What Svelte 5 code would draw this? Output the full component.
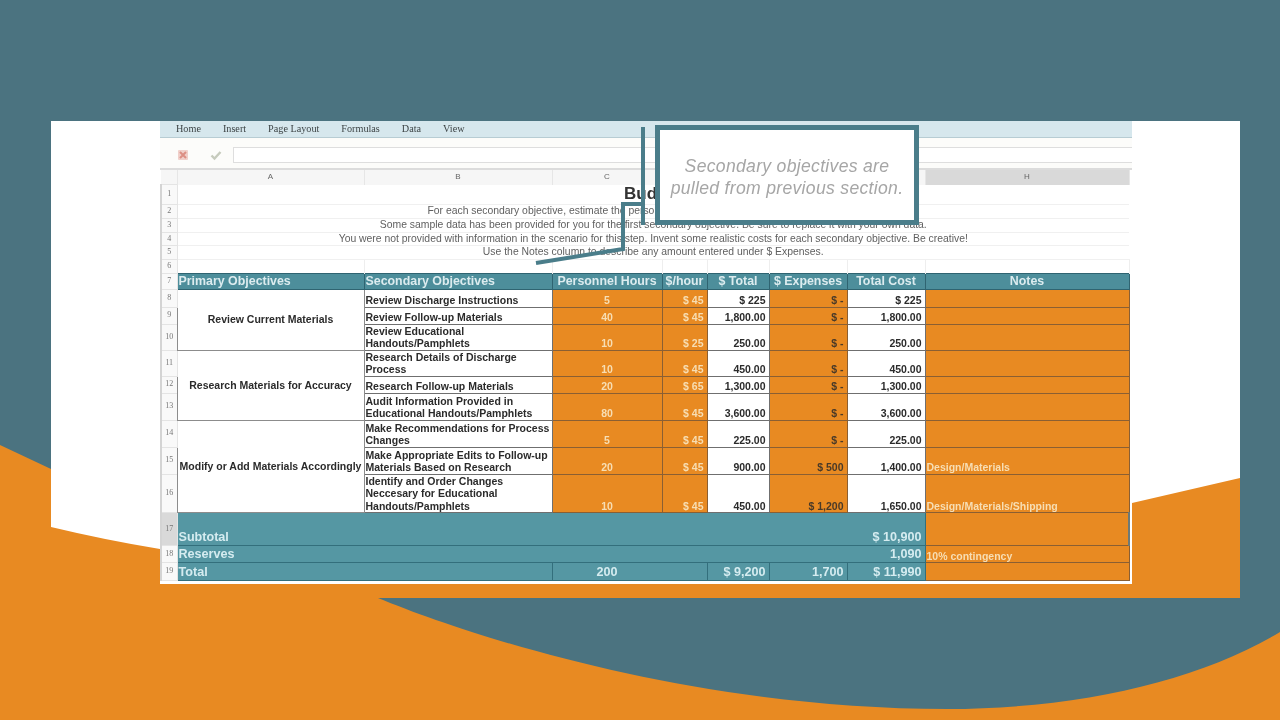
<script>
	const menu = ['Home', 'Insert', 'Page Layout', 'Formulas', 'Data', 'View'];
	const letters = ['A', 'B', 'C', '', '', '', '', 'H'];
	const intro = [
		{ n: 2, h: 14, text: 'For each secondary objective, estimate the personnel cost and any other expenses for the project.' },
		{ n: 3, h: 13, text: 'Some sample data has been provided for you for the first secondary objective. Be sure to replace it with your own data.' },
		{ n: 4, h: 13, text: 'You were not provided with information in the scenario for this step. Invent some realistic costs for each secondary objective. Be creative!' },
		{ n: 5, h: 14, text: 'Use the Notes column to describe any amount entered under $ Expenses.' }
	];
	const heads = ['Primary Objectives', 'Secondary Objectives', 'Personnel Hours', '$/hour', '$ Total', '$ Expenses', 'Total Cost', 'Notes'];
	const rows = [
		{ n: 8, h: 18, primary: 'Review Current Materials', span: 3, name: 'Review Discharge Instructions', hours: 5, rate: '$ 45', total: '$ 225', exp: '$ -', cost: '$ 225' },
		{ n: 9, h: 17, name: 'Review Follow-up Materials', hours: 40, rate: '$ 45', total: '1,800.00', exp: '$ -', cost: '1,800.00' },
		{ n: 10, h: 26, name: 'Review Educational Handouts/Pamphlets', hours: 10, rate: '$ 25', total: '250.00', exp: '$ -', cost: '250.00' },
		{ n: 11, h: 25, primary: 'Research Materials for Accuracy', span: 3, name: 'Research Details of Discharge Process', hours: 10, rate: '$ 45', total: '450.00', exp: '$ -', cost: '450.00' },
		{ n: 12, h: 17, name: 'Research Follow-up Materials', hours: 20, rate: '$ 65', total: '1,300.00', exp: '$ -', cost: '1,300.00' },
		{ n: 13, h: 27, name: 'Audit Information Provided in Educational Handouts/Pamphlets', hours: 80, rate: '$ 45', total: '3,600.00', exp: '$ -', cost: '3,600.00' },
		{ n: 14, h: 27, primary: 'Modify or Add Materials Accordingly', span: 3, name: 'Make Recommendations for Process Changes', hours: 5, rate: '$ 45', total: '225.00', exp: '$ -', cost: '225.00' },
		{ n: 15, h: 27, name: 'Make Appropriate Edits to Follow-up Materials Based on Research', hours: 20, rate: '$ 45', total: '900.00', exp: '$ 500', cost: '1,400.00', note: 'Design/Materials' },
		{ n: 16, h: 38, name: 'Identify and Order Changes Neccesary for Educational Handouts/Pamphlets', hours: 10, rate: '$ 45', total: '450.00', exp: '$ 1,200', cost: '1,650.00', note: 'Design/Materials/Shipping' }
	];
</script>

<div class="slide">
	<svg class="backdrop" viewBox="0 0 1280 720" aria-hidden="true">
		<rect width="1280" height="720" fill="#4b7380" />
		<path d="M0 445 L51 469 L51 598 L378 598 C480 640 700 709 947 709 C1080 709 1200 680 1280 632 L1280 720 L0 720 Z" fill="#e88a22" />
		<rect x="51" y="121" width="1189" height="477" fill="#fff" />
		<path d="M51 527 Q105 540 160 549 L1132 503 L1240 478 L1240 598 L51 598 Z" fill="#e88a22" />
	</svg>

	<div class="sheet">
		<nav class="menu">
			{#each menu as item}
				<span>{item}</span>
			{/each}
		</nav>
		<div class="formula">
			<svg class="tool cancel" viewBox="0 0 12 12" aria-hidden="true">
				<rect x="1" y="1" width="10" height="10" rx="1" fill="#f0d0ca" />
				<path d="M3 3 L9 9 M9 3 L3 9" stroke="#dc8f84" stroke-width="2" />
			</svg>
			<svg class="tool" viewBox="0 0 12 12" aria-hidden="true">
				<path d="M1.5 6.5 L4.5 9.5 L10.5 3" fill="none" stroke="#c6cbbd" stroke-width="2.4" />
			</svg>
			<div class="input"></div>
		</div>

		<table>
			<colgroup>
				<col class="c-num" /><col class="c-a" /><col class="c-b" /><col class="c-c" /><col class="c-d" /><col class="c-e" /><col class="c-f" /><col class="c-g" /><col class="c-h" />
			</colgroup>
			<thead>
				<tr class="letters">
					<th></th>
					{#each letters as l}
						<th class:picked={l === 'H'}>{l}</th>
					{/each}
				</tr>
			</thead>
			<tbody>
				<tr style:height="20px">
					<td class="num">1</td>
					<td colspan="8" class="title">Budget</td>
				</tr>
				{#each intro as line}
					<tr style:height="{line.h}px">
						<td class="num">{line.n}</td>
						<td colspan="8" class="intro">{line.text}</td>
					</tr>
				{/each}
				<tr class="spacer" style:height="13px">
					<td class="num">6</td>
					{#each letters as l}
						<td></td>
					{/each}
				</tr>
				<tr class="heads" style:height="16px">
					<td class="num">7</td>
					{#each heads as head, i}
						<th class:left={i < 2}>{head}</th>
					{/each}
				</tr>
				{#each rows as row}
					<tr style:height="{row.h}px">
						<td class="num">{row.n}</td>
						{#if row.primary}
							<td rowspan={row.span} class="primary">{row.primary}</td>
						{/if}
						<td class="name">{row.name}</td>
						<td class="fill pale mid">{row.hours}</td>
						<td class="fill pale right">{row.rate}</td>
						<td class="plain right">{row.total}</td>
						<td class="fill dark right">{row.exp}</td>
						<td class="plain right">{row.cost}</td>
						<td class="fill pale note">{row.note ?? ''}</td>
					</tr>
				{/each}
				<tr class="sum" style:height="33px">
					<td class="num grey">17</td>
					<td colspan="7" class="band"><div class="split"><span>Subtotal</span><span>$ 10,900</span></div></td>
					<td class="fill inset"></td>
				</tr>
				<tr class="sum" style:height="17px">
					<td class="num">18</td>
					<td colspan="7" class="band"><div class="split"><span>Reserves</span><span>1,090</span></div></td>
					<td class="fill pale note">10% contingency</td>
				</tr>
				<tr class="sum" style:height="18px">
					<td class="num">19</td>
					<td colspan="2" class="band">Total</td>
					<td colspan="2" class="band hours">200</td>
					<td class="band right">$ 9,200</td>
					<td class="band right">1,700</td>
					<td class="band right">$ 11,990</td>
					<td class="fill"></td>
				</tr>
			</tbody>
		</table>
	</div>

	<svg class="leader" viewBox="0 0 1280 720" aria-hidden="true">
		<polyline points="536,263 623,249 623,204 641,204" />
		<line x1="643" y1="127" x2="643" y2="225" />
	</svg>
	<div class="callout">Secondary objectives are<br />pulled from previous section.</div>
</div>

<style>
	:global(body) {
		margin: 0;
	}
	.slide {
		position: relative;
		width: 1280px;
		height: 720px;
		overflow: hidden;
		box-sizing: border-box;
		padding: 121px 0 0 160px;
		font-family: 'Liberation Sans', Arial, sans-serif;
	}
	.backdrop,
	.leader {
		position: absolute;
		left: 0;
		top: 0;
		width: 1280px;
		height: 720px;
	}
	.leader polyline,
	.leader line {
		fill: none;
		stroke: #4a7d8a;
		stroke-width: 4;
	}
	.sheet {
		position: relative;
		width: 972px;
		height: 463px;
		background: #fff;
		filter: blur(0.6px);
	}
	.menu {
		display: flex;
		gap: 22px;
		box-sizing: border-box;
		height: 17px;
		padding: 1px 0 0 16px;
		background: #d6e7ed;
		border-bottom: 1px solid #b7ccd3;
		font-family: 'Liberation Serif', serif;
		font-size: 10.2px;
		line-height: 14px;
		color: #3d4446;
	}
	.formula {
		display: flex;
		align-items: center;
		gap: 11px;
		box-sizing: border-box;
		height: 32px;
		padding: 3px 0 0 17px;
		background: #fcfcfa;
		border-bottom: 2px solid #dcdcdc;
	}
	.tool {
		width: 12px;
		height: 12px;
		flex: none;
	}
	.cancel {
		margin-right: 10px;
	}
	.input {
		flex: 1;
		height: 14px;
		background: #fff;
		border: 1px solid #dedede;
		border-right: 0;
	}
	table {
		table-layout: fixed;
		width: 968px;
		border-collapse: collapse;
		font-size: 10.5px;
		line-height: 12.5px;
		color: #2b2b2b;
	}
	.c-num { width: 16px; }
	.c-a { width: 187px; }
	.c-b { width: 188px; }
	.c-c { width: 110px; }
	.c-d { width: 45px; }
	.c-e { width: 62px; }
	.c-f { width: 78px; }
	.c-g { width: 78px; }
	.c-h { width: 204px; }
	td,
	th {
		padding: 0 1px;
		overflow: hidden;
	}
	.letters th {
		height: 14px;
		background: #f6f6f6;
		border-right: 1px solid #e6e6e6;
		font-size: 8px;
		font-weight: normal;
		color: #666;
	}
	.letters th.picked {
		background: #d9d9d9;
	}
	.num {
		padding: 0;
		background: #f9f9f9;
		border: 1px solid #e4e4e4;
		border-left: 2px solid #d4d4d4;
		font-family: 'Liberation Serif', serif;
		font-size: 8px;
		text-align: center;
		color: #777;
	}
	.num.grey {
		background: #d9d9d9;
	}
	.title {
		font-size: 17px;
		font-weight: bold;
		text-align: center;
		color: #333;
	}
	.intro {
		border-top: 1px solid #f0f0f0;
		border-bottom: 1px solid #f0f0f0;
		font-size: 10.4px;
		text-align: center;
		color: #5f5f5f;
		white-space: nowrap;
	}
	.spacer td:not(.num) {
		border-right: 1px solid #eee;
	}
	.heads th {
		padding: 0 1px;
		background: #4d8e9b;
		border: 1px solid #2f6471;
		font-size: 12.4px;
		text-align: center;
		color: #dcecef;
		white-space: nowrap;
	}
	.heads th.left {
		text-align: left;
	}
	.primary {
		background: #fff;
		border: 1px solid #8c8c8c;
		font-weight: bold;
		text-align: center;
		white-space: nowrap;
	}
	.name {
		background: #fff;
		border: 1px solid #6f6f6f;
		font-weight: bold;
		vertical-align: bottom;
	}
	.fill {
		background: #e88a22;
		border: 1px solid #8a5f33;
		font-weight: bold;
		vertical-align: bottom;
	}
	.plain {
		background: #fff;
		border: 1px solid #6f6f6f;
		font-weight: bold;
		vertical-align: bottom;
	}
	.pale {
		color: #f7deb4;
	}
	.dark {
		color: #4a3a28;
	}
	.mid {
		text-align: center;
	}
	.right {
		padding-right: 3px;
		text-align: right;
	}
	.note {
		white-space: nowrap;
	}
	.inset {
		border-right: 2px solid #6d7a78;
	}
	.band {
		padding-bottom: 2px;
		background: #5597a3;
		border: 1px solid #336f7c;
		font-size: 12.6px;
		font-weight: bold;
		color: #d5ecf0;
		vertical-align: bottom;
	}
	.split {
		display: flex;
		justify-content: space-between;
		padding-right: 2px;
	}
	.hours {
		padding-right: 46px;
		text-align: center;
	}
	.callout {
		position: absolute;
		left: 655px;
		top: 125px;
		box-sizing: border-box;
		width: 264px;
		height: 100px;
		display: flex;
		align-items: center;
		justify-content: center;
		padding-top: 4px;
		background: #fff;
		border: 5px solid #4a7d8a;
		font-size: 17.6px;
		font-style: italic;
		line-height: 22px;
		letter-spacing: 0.3px;
		text-align: center;
		color: #a6a6a6;
		filter: blur(0.3px);
	}
</style>
